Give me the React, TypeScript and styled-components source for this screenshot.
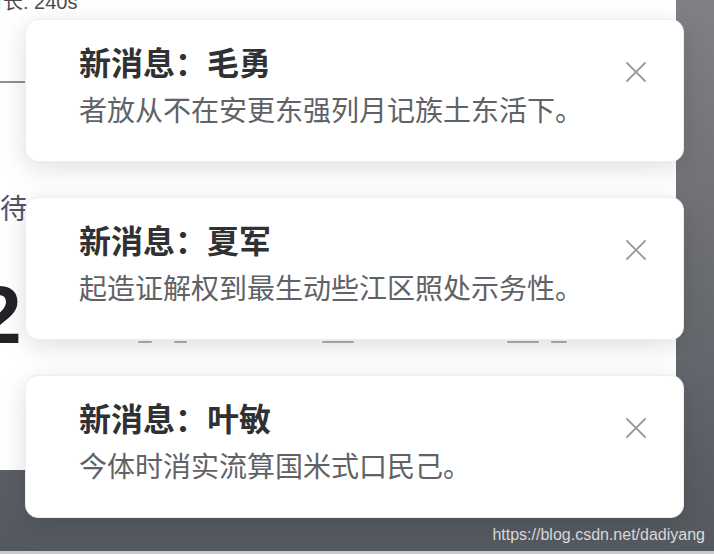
import React from 'react'
import styled, { createGlobalStyle } from 'styled-components'

const GlobalStyle = createGlobalStyle`
  html, body {
    margin: 0;
    padding: 0;
    background: #5a5e65;
  }
  * {
    box-sizing: border-box;
  }
`

const CJK = `"Liberation Sans", "Noto Sans CJK SC", sans-serif`

type Notice = { id: number; name: string; text: string }

const notices: Notice[] = [
  { id: 1, name: '毛勇', text: '者放从不在安更东强列月记族土东活下。' },
  { id: 2, name: '夏军', text: '起造证解权到最生动些江区照处示务性。' },
  { id: 3, name: '叶敏', text: '今体时消实流算国米式口民己。' },
]

// bits of the page text that peek out under the second notice
const ticks = [
  { gap: 116, width: 14 },
  { gap: 22, width: 13 },
  { gap: 135, width: 32 },
  { gap: 153, width: 32 },
  { gap: 12, width: 16 },
]

const CloseIcon = () => (
  <svg width='20' height='20' viewBox='0 0 20 20' fill='none'>
    <path d='M1 1L19 19M19 1L1 19' stroke='#9a9b9e' strokeWidth='1.8' strokeLinecap='round' />
  </svg>
)

const App = () => {
  return (
    <React.Fragment>
      <GlobalStyle />
      <Viewport>
        <Page>
          <TopText>时长: 240s</TopText>
          <Divider />
          <WaitText>等待</WaitText>
          <StatRow>
            <BigNumber>2</BigNumber>
            {ticks.map((t, i) => (
              <Tick key={i} $gap={t.gap} $width={t.width} />
            ))}
          </StatRow>
        </Page>
        <Footer>
          <Watermark>https://blog.csdn.net/dadiyang</Watermark>
        </Footer>
        <NotificationStack>
          {notices.map((n) => (
            <Card key={n.id}>
              <Title>新消息：{n.name}</Title>
              <Content>{n.text}</Content>
              <CloseButton aria-label='close'>
                <CloseIcon />
              </CloseButton>
            </Card>
          ))}
        </NotificationStack>
      </Viewport>
    </React.Fragment>
  )
}

export default App

const Viewport = styled.div`
  position: relative;
  width: 714px;
  height: 554px;
  overflow: hidden;
  display: flex;
  flex-direction: column;
  background: linear-gradient(180deg, #808185 0%, #6c6e73 45%, #54595f 100%);
`

const Page = styled.div`
  width: 676px;
  height: 470px;
  flex: none;
  background: #ffffff;
  overflow: hidden;
`

const TopText = styled.div`
  margin: -8px 0 0 -17px;
  height: 20px;
  font-family: ${CJK};
  font-size: 20px;
  line-height: 20px;
  color: #4a4c52;
  white-space: nowrap;
`

const Divider = styled.div`
  margin-top: 69px;
  height: 2px;
  background: #8f9095;
`

const WaitText = styled.div`
  margin: 107px 0 0 -28px;
  height: 40px;
  font-family: ${CJK};
  font-size: 28px;
  line-height: 40px;
  color: #55536a;
  white-space: nowrap;
`

const StatRow = styled.div`
  display: flex;
  align-items: flex-start;
  margin-top: 44px;
`

const BigNumber = styled.div`
  margin-left: -24px;
  width: 46px;
  flex: none;
  font-family: "Liberation Sans", Arial, sans-serif;
  font-weight: 700;
  font-size: 82px;
  line-height: 82px;
  color: #222326;
`

const Tick = styled.span<{ $gap: number; $width: number }>`
  flex: none;
  margin-top: 67px;
  margin-left: ${(p) => p.$gap}px;
  width: ${(p) => p.$width}px;
  height: 2px;
  border-radius: 2px;
  background: #aeafb3;
`

const Footer = styled.div`
  flex: 1;
  display: flex;
  justify-content: flex-end;
  align-items: flex-end;
  padding: 0 9px 8px 0;
  border-bottom: 3px solid #c9c9cb;
`

const Watermark = styled.div`
  font-family: "Liberation Sans", Arial, sans-serif;
  font-size: 16px;
  line-height: 16px;
  color: #dcdddf;
`

const NotificationStack = styled.div`
  position: absolute;
  top: 19px;
  right: 30px;
  width: 659px;
  display: flex;
  flex-direction: column;
  gap: 35px;
`

const Card = styled.div`
  position: relative;
  height: 143px;
  padding: 22px 60px 0 53px;
  background: #ffffff;
  border: 1px solid #ebeef5;
  border-radius: 13px;
  box-shadow: 0 6px 26px 0 rgba(0, 0, 0, 0.13);
  font-family: ${CJK};
`

const Title = styled.h2`
  margin: 0;
  font-size: 32px;
  font-weight: 700;
  line-height: 44px;
  color: #303133;
  white-space: nowrap;
`

const Content = styled.p`
  margin: 7px 0 0;
  font-size: 28px;
  line-height: 38px;
  color: #606266;
  white-space: nowrap;
`

const CloseButton = styled.span`
  position: absolute;
  top: 42px;
  right: 37px;
  width: 20px;
  height: 20px;
  display: flex;
  cursor: pointer;
`
